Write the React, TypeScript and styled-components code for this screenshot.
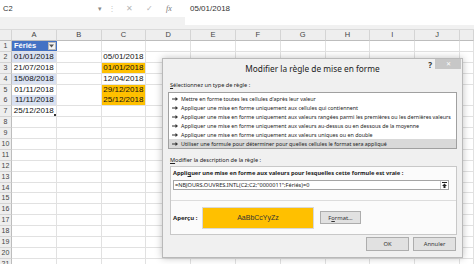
import styled, { createGlobalStyle } from "styled-components";

const GlobalStyle = createGlobalStyle`
  html, body { margin: 0; padding: 0; background: #fff; }
  body { font-family: "Liberation Sans", Arial, sans-serif; }
  * { box-sizing: border-box; }
`;

const columns = ["A", "B", "C", "D", "E", "F", "G", "H", "I", "J"];

type SheetData = { a?: string; c?: string; cHi?: boolean };

const data: SheetData[] = [
  {},
  { a: "01/01/2018", c: "05/01/2018" },
  { a: "21/07/2018", c: "01/01/2018", cHi: true },
  { a: "15/08/2018", c: "12/04/2018" },
  { a: "01/11/2018", c: "29/12/2018", cHi: true },
  { a: "11/11/2018", c: "25/12/2018", cHi: true },
  { a: "25/12/2018" },
];

const ruleTypes = [
  "Mettre en forme toutes les cellules d'après leur valeur",
  "Appliquer une mise en forme uniquement aux cellules qui contiennent",
  "Appliquer une mise en forme uniquement aux valeurs rangées parmi les premières ou les dernières valeurs",
  "Appliquer une mise en forme uniquement aux valeurs au-dessus ou en dessous de la moyenne",
  "Appliquer une mise en forme uniquement aux valeurs uniques ou en double",
  "Utiliser une formule pour déterminer pour quelles cellules le format sera appliqué",
];

const App = () => {
  const rowCount = 21;
  return (
    <Page>
      <GlobalStyle />
      <FormulaBar>
        <BarLeft>
          <NameBox>
            <span>C2</span>
            <Caret>▾</Caret>
          </NameBox>
          <Grip>⋮</Grip>
          <BarIcon>✕</BarIcon>
          <BarIcon>✓</BarIcon>
          <FxIcon>fx</FxIcon>
        </BarLeft>
        <FormulaInput>05/01/2018</FormulaInput>
      </FormulaBar>

      <Sheet>
        <SheetRow isHeader>
          <Corner />
          {columns.map((c) => (
            <ColHeader key={c}>{c}</ColHeader>
          ))}
          <ColHeader />
        </SheetRow>
        {Array.from({ length: rowCount }).map((_, i) => {
          const r = data[i] ?? {};
          return (
            <SheetRow key={i}>
              <RowHeader>{i + 1}</RowHeader>
              {i === 0 ? (
                <TableHead>
                  Fériés
                  <FilterBtn>
                    <svg width="5" height="4" viewBox="0 0 5 4">
                      <path d="M0 0.5h5L2.5 3.5z" fill="#555" />
                    </svg>
                  </FilterBtn>
                </TableHead>
              ) : (
                <Cell band={i < 7 && i % 2 === 1}>
                  {r.a}
                  {i === 6 && <ResizeHandle />}
                </Cell>
              )}
              <Cell />
              <Cell highlight={r.cHi}>{r.c}</Cell>
              {columns.slice(3).map((c) => (
                <Cell key={c} />
              ))}
              <Cell />
            </SheetRow>
          );
        })}
      </Sheet>

      <Dialog>
        <TitleBar>
          <span />
          <Title>Modifier la règle de mise en forme</Title>
          <TitleActions>
            <Help>?</Help>
            <CloseBtn>✕</CloseBtn>
          </TitleActions>
        </TitleBar>
        <DialogBody>
          <Label>
            <u>S</u>électionnez un type de règle :
          </Label>
          <RuleList>
            {ruleTypes.map((t, i) => (
              <RuleItem key={t} selected={i === ruleTypes.length - 1}>
                <svg width="6" height="4" viewBox="0 0 6 4">
                  <path d="M0 1.5h3.5V0L6 2 3.5 4V2.5H0z" fill="#333" />
                </svg>
                <span>{t}</span>
              </RuleItem>
            ))}
          </RuleList>
          <Label spaced>
            <u>M</u>odifier la description de la règle :
          </Label>
          <DescBox>
            <FormulaSection>
              <BoldLine>
                Appli<u>q</u>uer une mise en forme aux valeurs pour lesquelles cette formule est vraie :
              </BoldLine>
              <FormulaField>
                <span>=NBJOURS.OUVRES.INTL(C2;C2;"0000011";Fériés)=0</span>
                <CollapseBtn>
                  <svg width="5" height="6" viewBox="0 0 5 6">
                    <path d="M0 0.5h5" stroke="#222" strokeWidth="1" />
                    <path d="M2.5 1.5L0 4h1.5v2h2V4H5z" fill="#222" />
                  </svg>
                </CollapseBtn>
              </FormulaField>
            </FormulaSection>
            <PreviewSection>
              <BoldLabel>Aperçu :</BoldLabel>
              <PreviewBox>AaBbCcYyZz</PreviewBox>
              <DialogButton small>
                F<u>o</u>rmat...
              </DialogButton>
            </PreviewSection>
          </DescBox>
          <ButtonRow>
            <DialogButton>OK</DialogButton>
            <DialogButton>Annuler</DialogButton>
          </ButtonRow>
        </DialogBody>
      </Dialog>
    </Page>
  );
};

export default App;

const Page = styled.div`
  position: relative;
  width: 474px;
  height: 264px;
  overflow: hidden;
  background: #fff;
`;

const FormulaBar = styled.div`
  display: flex;
  height: 30px;
  background: #f1f1f1;
  border-bottom: 1px solid #dadada;
`;

const BarLeft = styled.div`
  display: flex;
  align-items: center;
  width: 185px;
  height: 17px;
  background: #fff;
`;

const NameBox = styled.div`
  display: flex;
  align-items: center;
  justify-content: space-between;
  width: 105px;
  height: 17px;
  padding: 0 3px 0 3px;
  font-family: "Liberation Sans", Arial, sans-serif;
  font-size: 7.5px;
  color: #333;
`;

const Caret = styled.span`
  font-size: 7px;
  color: #888;
`;

const Grip = styled.span`
  width: 14px;
  text-align: center;
  font-size: 8px;
  color: #c8c8c8;
`;

const BarIcon = styled.span`
  width: 20px;
  text-align: center;
  font-size: 8px;
  color: #b4b4b4;
`;

const FxIcon = styled.span`
  width: 20px;
  text-align: center;
  font-family: "Liberation Serif", serif;
  font-style: italic;
  font-size: 8px;
  color: #777;
`;

const FormulaInput = styled.div`
  flex: 1;
  height: 25px;
  background: #fff;
  padding: 4px 5px;
  font-size: 8px;
  color: #333;
`;

const Sheet = styled.div`
  display: flex;
  flex-direction: column;
`;

const SheetRow = styled.div<{ isHeader?: boolean }>`
  display: grid;
  grid-template-columns: 12px repeat(10, 44.8px) 1fr;
  height: ${({ isHeader }) => (isHeader ? "11px" : "10.9px")};
  flex-shrink: 0;
`;

const Corner = styled.div`
  background: #eeeeee;
  border-right: 1px solid #d4d4d4;
  border-bottom: 1px solid #bdbdbd;
`;

const ColHeader = styled.div`
  background: #eeeeee;
  border-right: 1px solid #d4d4d4;
  border-bottom: 1px solid #bdbdbd;
  font-size: 7.5px;
  line-height: 10px;
  text-align: center;
  color: #444;
`;

const RowHeader = styled.div`
  background: #eeeeee;
  border-right: 1px solid #bdbdbd;
  border-bottom: 1px solid #d4d4d4;
  font-size: 7px;
  line-height: 10px;
  text-align: center;
  color: #444;
  overflow: hidden;
`;

const Cell = styled.div<{ band?: boolean; highlight?: boolean }>`
  position: relative;
  background: ${({ band, highlight }) =>
    highlight ? "#ffc000" : band ? "#d9e1f2" : "#fff"};
  border-right: 1px solid #e1e1e1;
  border-bottom: 1px solid #e1e1e1;
  font-size: 8px;
  line-height: 10px;
  text-align: right;
  padding-right: 2px;
  color: #111;
  white-space: nowrap;
`;

const ResizeHandle = styled.span`
  position: absolute;
  right: 0;
  bottom: 0;
  width: 2px;
  height: 2px;
  background: #333;
`;

const TableHead = styled.div`
  display: flex;
  align-items: center;
  justify-content: space-between;
  background: #4472c4;
  color: #fff;
  font-weight: bold;
  font-size: 7.5px;
  padding: 0 1px 0 2px;
  border-bottom: 1px solid #e1e1e1;
`;

const FilterBtn = styled.span`
  display: flex;
  align-items: center;
  justify-content: center;
  width: 8px;
  height: 8px;
  background: #f4f4f4;
  border: 1px solid #b9b9b9;
`;

const Dialog = styled.div`
  position: absolute;
  left: 162px;
  top: 58px;
  width: 301px;
  height: 200px;
  background: #f0f0f0;
  border: 1px solid #b9b9b9;
  box-shadow: 0 0 7px rgba(0, 0, 0, 0.25);
  display: flex;
  flex-direction: column;
  font-family: "Noto Sans", "Open Sans", sans-serif;
  color: #222;
`;

const TitleBar = styled.div`
  display: grid;
  grid-template-columns: 1fr auto 1fr;
  align-items: start;
  height: 19px;
`;

const Title = styled.div`
  font-size: 8.3px;
  line-height: 19px;
  color: #222;
`;

const TitleActions = styled.div`
  display: flex;
  justify-content: flex-end;
  align-items: flex-start;
  gap: 3px;
  padding-right: 1px;
`;

const Help = styled.span`
  font-size: 8px;
  font-weight: bold;
  line-height: 12px;
  color: #333;
`;

const CloseBtn = styled.span`
  width: 26px;
  height: 10px;
  background: #c7c7c7;
  color: #fff;
  font-size: 6px;
  line-height: 10px;
  text-align: center;
`;

const DialogBody = styled.div`
  display: flex;
  flex-direction: column;
  padding: 0 5px 0 5px;
`;

const Label = styled.div<{ spaced?: boolean }>`
  margin-top: ${({ spaced }) => (spaced ? "7px" : "3px")};
  padding-left: 2px;
  height: 8px;
  font-size: 5.6px;
  line-height: 8px;
  color: #222;
`;

const RuleList = styled.div`
  margin-top: 3px;
  height: 57px;
  background: #fff;
  border: 1px solid #a0a0a0;
  display: flex;
  flex-direction: column;
  padding-top: 1px;
  overflow: hidden;
`;

const RuleItem = styled.div<{ selected?: boolean }>`
  display: flex;
  align-items: center;
  gap: 3px;
  height: 9.3px;
  padding-left: 3px;
  font-size: 5.35px;
  white-space: nowrap;
  color: #222;
  background: ${({ selected }) => (selected ? "#d9d9d9" : "transparent")};
  svg {
    flex-shrink: 0;
  }
`;

const DescBox = styled.div`
  margin-top: 2px;
  margin-left: 2px;
  height: 69px;
  background: #fbfbfb;
  border: 1px solid #c8c8c8;
  display: flex;
  flex-direction: column;
`;

const FormulaSection = styled.div`
  height: 34px;
  padding: 2px 7px 0 2px;
  border-bottom: 1px solid #dcdcdc;
`;

const BoldLine = styled.div`
  height: 8px;
  font-size: 5.7px;
  line-height: 8px;
  font-weight: bold;
  white-space: nowrap;
`;

const FormulaField = styled.div`
  margin-top: 3px;
  height: 10px;
  display: flex;
  align-items: center;
  justify-content: space-between;
  background: #fff;
  border: 1px solid #a5a5a5;
  padding-left: 1px;
  font-size: 5.6px;
  white-space: nowrap;
`;

const CollapseBtn = styled.span`
  display: flex;
  align-items: center;
  justify-content: center;
  width: 8px;
  height: 8px;
  border-left: 1px solid #c8c8c8;
`;

const PreviewSection = styled.div`
  flex: 1;
  display: flex;
  align-items: center;
  padding: 0 0 0 2px;
`;

const BoldLabel = styled.span`
  width: 29px;
  font-size: 6px;
  font-weight: bold;
`;

const PreviewBox = styled.div`
  width: 112px;
  height: 22px;
  background: #ffc000;
  border: 1px solid #d8d8d8;
  font-family: "Liberation Sans", Arial, sans-serif;
  font-size: 7px;
  line-height: 20px;
  text-align: center;
  color: #333;
  margin-right: 6px;
`;

const DialogButton = styled.button<{ small?: boolean }>`
  width: ${({ small }) => (small ? "41px" : "43px")};
  height: ${({ small }) => (small ? "13px" : "14px")};
  padding: 0;
  background: #e1e1e1;
  border: 1px solid #adadad;
  font-family: "Noto Sans", "Open Sans", sans-serif;
  font-size: 5.8px;
  color: #333;
`;

const ButtonRow = styled.div`
  margin-top: 2px;
  display: flex;
  justify-content: flex-end;
  gap: 4px;
  padding-right: 1px;
`;
